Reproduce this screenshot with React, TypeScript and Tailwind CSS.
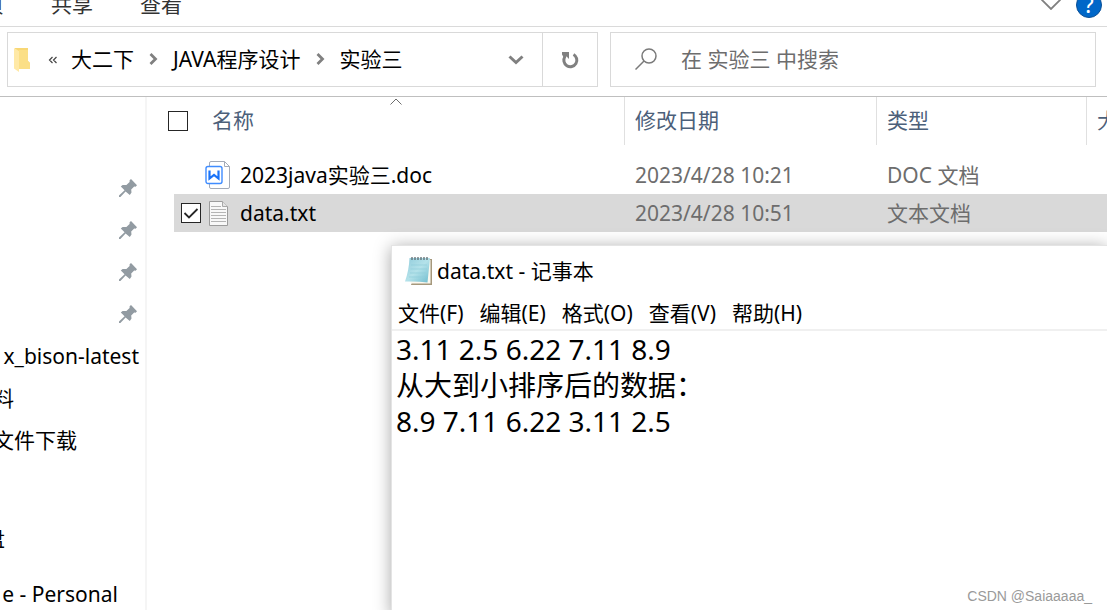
import { useState } from 'react';

interface FileItem {
  name: string;
  date: string;
  type: string;
  kind: 'doc' | 'txt';
}

const files: FileItem[] = [
  { name: '2023java实验三.doc', date: '2023/4/28 10:21', type: 'DOC 文档', kind: 'doc' },
  { name: 'data.txt', date: '2023/4/28 10:51', type: '文本文档', kind: 'txt' },
];

const menus = ['文件(F)', '编辑(E)', '格式(O)', '查看(V)', '帮助(H)'];

const noteText = `3.11 2.5 6.22 7.11 8.9
从大到小排序后的数据：
8.9 7.11 6.22 3.11 2.5`;

const PinIcon = () => (
  <svg width="18" height="18" viewBox="0 0 18 18" fill="#929ba2">
    <path d="M12 0 18 6.2 16.6 7.8 15.2 7.6 12.2 10.6 12.5 13.6 10.8 16 6.6 12.5 1.4 18H0V16.4L5.6 11.2 1.8 7.4 3.6 5.9 7.4 6 10.6 3 10.6 1.2Z" />
  </svg>
);

const FolderIcon = () => (
  <svg width="17" height="24" viewBox="0 0 17 24">
    <path d="M1 0H14V13L16 15V21H1Z" fill="#f8d775" />
    <path d="M5 2H14V13L16 15V21H5Z" fill="#fbdf87" />
    <path d="M0 0 5 3V24L0 20.5Z" fill="#ffe9a6" />
  </svg>
);

const CrumbArrow = () => (
  <svg width="9" height="12" viewBox="0 0 9 12" fill="none" stroke="#808080" strokeWidth="2.8">
    <path d="M1.5 1 6.5 6 1.5 11" />
  </svg>
);

const DocIcon = () => (
  <svg width="26" height="28" viewBox="0 0 26 28" fill="none">
    <path d="M4.5 5V2Q4.5 .5 6 .5H19.5L24.5 5.5V26Q24.5 27.5 23 27.5H6Q4.5 27.5 4.5 26V22" fill="#fff" stroke="#a4abb8" />
    <path d="M19.5 .5V5.5H24.5" stroke="#a4abb8" />
    <rect x="1" y="5.5" width="16" height="17" rx="2" fill="#fff" stroke="#3f8cff" strokeWidth="1.4" />
    <path d="M4.5 9.5V17.5L9 14 13.5 17.5V9.5" stroke="#1a73f8" strokeWidth="2.2" />
  </svg>
);

const TxtIcon = () => (
  <svg width="19" height="25" viewBox="0 0 19 25" fill="none">
    <path d="M.5 .5H13.5L18.5 5.5V24.5H.5Z" fill="#f8f8f8" stroke="#9c9c9c" />
    <path d="M13.5 .5V5.5H18.5" fill="#e4e4e4" stroke="#a8a8a8" />
    <path d="M2 5.5H12M2 8.5H17M2 11.5H17M2 14.5H17M2 17.5H17M2 20.5H17" stroke="#b4b4b4" />
  </svg>
);

const NotepadIcon = () => (
  <svg width="28" height="30" viewBox="0 0 28 30">
    <defs>
      <linearGradient id="page" x1="0" y1="0" x2="1" y2="1">
        <stop offset="0" stopColor="#8fcbdb" />
        <stop offset=".5" stopColor="#b4e2ea" />
        <stop offset="1" stopColor="#6fbcce" />
      </linearGradient>
    </defs>
    <path d="M7 26 22 3H27V29H6Z" fill="#a5987c" />
    <path d="M5 25 23 4H25.5V27.5H6Z" fill="#fbf8ef" />
    <path d="M4.5 2H25L22.5 26.5Q12 25 0 25.5Q4 14 4.5 2Z" fill="url(#page)" />
    <path d="M6 9H22M5.5 13H22M5 17H21M4 21H20.5" stroke="#8fcdda" strokeWidth=".7" />
    <path d="M7 1V4M10 1V4M13 1V4M16 1V4M19 1V4M22 1V4" stroke="#5c6a70" strokeWidth="1.3" />
  </svg>
);

const Checkbox = ({ checked, onChange, label, hidden = false }: { checked: boolean; onChange: () => void; label: string; hidden?: boolean }) => (
  <span className={`grid h-5 w-5 shrink-0 ${hidden ? 'opacity-0 hover:opacity-100' : ''}`}>
    <input
      type="checkbox"
      aria-label={label}
      checked={checked}
      onChange={onChange}
      className="col-start-1 row-start-1 h-5 w-5 appearance-none border border-[#262626] bg-white"
    />
    {checked && (
      <svg className="pointer-events-none col-start-1 row-start-1" width="20" height="20" viewBox="0 0 20 20" fill="none" stroke="#262626" strokeWidth="1.8">
        <path d="M3.5 10 8 14.5 16.5 6" />
      </svg>
    )}
  </span>
);

const Ribbon = () => (
  <div className="flex h-[27px] items-end justify-between overflow-hidden border-b border-[#dadada] pr-[5px] text-[#333]">
    <div className="-ml-[38px] flex gap-[47px] pb-2 leading-7">
      <button>主页</button>
      <button>共享</button>
      <button>查看</button>
    </div>
    <div className="flex items-end gap-[15px] pb-2">
      <button aria-label="展开功能区" className="pb-2">
        <svg width="20" height="11" viewBox="0 0 20 11" fill="none" stroke="#808080" strokeWidth="1.8">
          <path d="M.5 .5 10 10 19.5 .5" />
        </svg>
      </button>
      <button aria-label="帮助" className="flex h-[26px] w-[26px] items-center justify-center rounded-full border border-[#0a4f96] bg-[#0067c8] leading-6 font-medium text-white">
        ?
      </button>
    </div>
  </div>
);

const AddressBar = () => (
  <div className="flex gap-3 border-b border-[#bfbfbf] pt-[5px] pr-[11px] pb-[9px] pl-[7px]">
    <div className="flex h-[55px] min-w-0 flex-1 items-center border border-[#d9d9d9] pl-[6px]">
      <FolderIcon />
      <button aria-label="更多位置" className="mr-[13px] ml-[17px]">
        <svg width="10" height="8" viewBox="0 0 10 8" fill="none" stroke="#444" strokeWidth="1.2">
          <path d="M4.5 1 1.5 4 4.5 7M8.5 1 5.5 4 8.5 7" />
        </svg>
      </button>
      <nav aria-label="路径" className="flex flex-1 items-center gap-[15px] pb-[2px] whitespace-nowrap">
        <button>大二下</button>
        <CrumbArrow />
        <button>JAVA程序设计</button>
        <CrumbArrow />
        <button>实验三</button>
      </nav>
      <button aria-label="以前的位置" className="px-[18px]">
        <svg width="16" height="11" viewBox="0 0 16 11" fill="none" stroke="#808080" strokeWidth="3">
          <path d="M1.5 2.5 8 8.5 14.5 2.5" />
        </svg>
      </button>
      <button aria-label="刷新" className="flex h-full w-[55px] items-center justify-center border-l border-[#d9d9d9]">
        <svg width="18" height="18" viewBox="0 0 18 18" fill="none" stroke="#808080" strokeWidth="3">
          <path d="M12.5 3.5A6.5 6.5 0 1 1 4 5.5" />
          <path d="M1 1H8V8L5.6 5.6 3 7 1 3.5Z" fill="#808080" stroke="none" />
        </svg>
      </button>
    </div>
    <label className="flex h-[55px] w-[486px] items-center gap-6 border border-[#d9d9d9] pb-[2px] pl-6">
      <svg className="shrink-0" width="22" height="22" viewBox="0 0 22 22" fill="none" stroke="#7a7a7a" strokeWidth="1.5">
        <circle cx="14" cy="8" r="7" />
        <path d="M9 13 .5 21.5" />
      </svg>
      <input
        type="text"
        aria-label="搜索"
        placeholder="在 实验三 中搜索"
        className="min-w-0 flex-1 outline-none placeholder:text-[#6d6d6d]"
      />
    </label>
  </div>
);

const Sidebar = () => (
  <nav aria-label="导航窗格" className="w-[147px] shrink-0 overflow-hidden border-r-2 border-[#f5f5f5] pt-[70px] whitespace-nowrap">
    {[1, 2, 3, 4].map((n) => (
      <div key={n} className="flex h-[42px] items-center justify-end pr-2">
        <PinIcon />
      </div>
    ))}
    <a href="#bison" className="flex h-[42px] items-center justify-end pr-[6px]">x_bison-latest</a>
    <a href="#materials" className="flex h-[42px] items-center justify-end pr-[131px]">资料</a>
    <a href="#downloads" className="flex h-[42px] items-center justify-end pr-[68px]">文件下载</a>
    <a href="#drive" className="mt-14 flex h-[42px] items-center justify-end pr-[140px]">盘</a>
    <a href="#onedrive" className="mt-[14px] flex h-[42px] items-center justify-end pr-[27px]">e - Personal</a>
  </nav>
);

const FileTable = () => {
  const [selected, setSelected] = useState<string[]>(['data.txt']);

  const toggle = (name: string) => {
    setSelected(selected.includes(name) ? selected.filter((n) => n !== name) : [...selected, name]);
  };

  const toggleAll = () => {
    setSelected(selected.length === files.length ? [] : files.map((f) => f.name));
  };

  return (
    <table className="w-full table-fixed whitespace-nowrap">
      <colgroup>
        <col className="w-[477px]" />
        <col className="w-[252px]" />
        <col className="w-[210px]" />
        <col />
      </colgroup>
      <thead className="text-left text-[#4c607a]">
        <tr>
          <th className="p-0 pb-[11px] font-normal">
            <div className="relative ml-[21px] flex h-12 items-center gap-6">
              <Checkbox label="全选" checked={selected.length === files.length} onChange={toggleAll} />
              <span className="pb-[2px]">名称</span>
              {/* sort direction */}
              <svg className="absolute top-px left-1/2 -translate-x-1/2" width="12" height="7" viewBox="0 0 12 7" fill="none" stroke="#6d6d6d">
                <path d="M.5 6.5 6 1 11.5 6.5" />
              </svg>
            </div>
          </th>
          {['修改日期', '类型', '大小'].map((title) => (
            <th key={title} className="overflow-hidden p-0 pb-[11px] font-normal">
              <div className="flex h-12 items-center border-l border-[#e0e0e0] pb-[2px] pl-[10px]">{title}</div>
            </th>
          ))}
        </tr>
      </thead>
      <tbody className="text-[#6d6d6d]">
        {files.map((file) => {
          const isSelected = selected.includes(file.name);
          const bg = isSelected ? 'bg-[#d9d9d9]' : '';
          return (
            <tr key={file.name}>
              <td className="p-0">
                <div className={`ml-[27px] flex h-[38px] items-center pl-[7px] text-black ${bg}`}>
                  <Checkbox label={file.name} checked={isSelected} onChange={() => toggle(file.name)} hidden={!isSelected} />
                  <span className="mr-[9px] ml-1 flex w-[26px] justify-center">
                    {file.kind === 'doc' ? <DocIcon /> : <TxtIcon />}
                  </span>
                  {file.name}
                </div>
              </td>
              <td className={`p-0 pl-[11px] ${bg}`}>{file.date}</td>
              <td className={`p-0 pl-[11px] ${bg}`}>{file.type}</td>
              <td className={`p-0 ${bg}`}></td>
            </tr>
          );
        })}
      </tbody>
    </table>
  );
};

const Notepad = () => (
  <section aria-label="记事本" className="absolute top-[245px] right-0 bottom-0 left-[391px] flex flex-col border-t border-l border-[#e4e4e4] bg-white shadow-[0_2px_16px_rgba(0,0,0,0.35)]">
    <div className="flex h-[50px] shrink-0 items-center gap-1 pl-[13px]">
      <NotepadIcon />
      <h1>data.txt - 记事本</h1>
    </div>
    <div className="flex h-[35px] shrink-0 items-center gap-4 border-b-2 border-[#f0f0f0] pl-[6px] whitespace-nowrap">
      {menus.map((menu) => (
        <button key={menu}>{menu}</button>
      ))}
    </div>
    <textarea
      aria-label="文本编辑器"
      defaultValue={noteText}
      spellCheck={false}
      className="w-full flex-1 resize-none overflow-hidden pl-1 text-[28px] leading-9 outline-none"
    />
  </section>
);

const App = () => (
  <div
    lang="zh-CN"
    className="relative flex min-h-screen flex-col overflow-hidden bg-white font-['Noto_Sans','Noto_Sans_CJK_SC',sans-serif] text-[21px] leading-7 text-black"
  >
    <Ribbon />
    <AddressBar />
    <div className="flex flex-1">
      <Sidebar />
      <main className="min-w-0 flex-1">
        <FileTable />
      </main>
    </div>
    <Notepad />
    <span className="absolute right-[15px] bottom-[9px] font-['Liberation_Sans',sans-serif] text-sm leading-5 text-[#9a9a9a]">CSDN @Saiaaaaa_</span>
  </div>
);

export default App;
